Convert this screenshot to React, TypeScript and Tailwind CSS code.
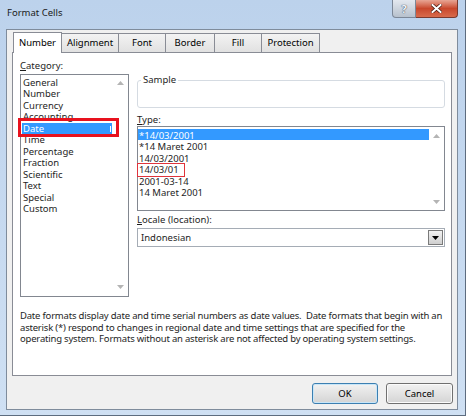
import React from 'react'

const categories = [
  'General',
  'Number',
  'Currency',
  'Accounting',
  'Date',
  'Time',
  'Percentage',
  'Fraction',
  'Scientific',
  'Text',
  'Special',
  'Custom',
]

const types = ['*14/03/2001', '*14 Maret 2001', '14/03/2001', '14/03/01', '2001-03-14', '14 Maret 2001']

const tabs = [
  { label: 'Number', w: 'w-[49px]' },
  { label: 'Alignment', w: 'w-[57px]' },
  { label: 'Font', w: 'w-[47px]' },
  { label: 'Border', w: 'w-[49px]' },
  { label: 'Fill', w: 'w-[47px]' },
  { label: 'Protection', w: 'w-[58px]' },
]

function Arrow({ down }: { down?: boolean }) {
  return (
    <svg width="7" height="4" viewBox="0 0 7 4">
      {down ? <path d="M0 0h7L3.5 4z" fill="#b4b4b4" /> : <path d="M0 4h7L3.5 0z" fill="#b4b4b4" />}
    </svg>
  )
}

function Scrollbar({ up, down }: { up: string; down: string }) {
  return (
    <div className="flex w-[15px] flex-col items-center justify-between">
      <div className={up}>
        <Arrow />
      </div>
      <div className={down}>
        <Arrow down />
      </div>
    </div>
  )
}

function TitleBar() {
  return (
    <div className="flex h-[29px] items-start justify-between pr-[7px]">
      <div className="pl-[7px] pt-[7px] text-[#1a1a1a]">Format Cells</div>
      <div className="flex">
        <div className="flex h-[18px] w-[24px] items-center justify-center rounded-bl-[4px] border border-t-0 border-[#7c8797] bg-linear-to-b from-[#e3e8ef] to-[#b7c1cd] text-[11px] font-bold text-[#f4f6f9] [text-shadow:0_0_1px_#3b4a5e,0_0_1px_#3b4a5e]">
          ?
        </div>
        <div className="flex h-[18px] w-[42px] items-center justify-center rounded-br-[4px] border border-t-0 border-l-0 border-[#7a3a2f] bg-linear-to-b from-[#e7a594] via-[#c8472c] to-[#d86b4c]">
          <svg width="11" height="9" viewBox="0 0 11 9">
            <path d="M1.5 1l8 7M9.5 1l-8 7" stroke="#4a1a10" strokeWidth="3.4" strokeLinecap="square" />
            <path d="M1.5 1l8 7M9.5 1l-8 7" stroke="#ffffff" strokeWidth="2" strokeLinecap="square" />
          </svg>
        </div>
      </div>
    </div>
  )
}

function Tabs() {
  return (
    <div className="relative z-10 -mb-px flex h-[21px] items-end pl-[1px]">
      {tabs.map((t, i) =>
        i === 0 ? (
          <div
            key={t.label}
            className={`${t.w} flex h-[21px] items-center justify-center border border-b-0 border-[#898c95] bg-white pb-[1px] text-black`}
          >
            {t.label}
          </div>
        ) : (
          <div
            key={t.label}
            className={`${t.w} flex h-[20px] items-center justify-center border-t border-b border-r border-[#898c95] bg-linear-to-b from-[#f3f3f3] to-[#e1e1e1] pb-[1px] text-black`}
          >
            {t.label}
          </div>
        ),
      )}
    </div>
  )
}

function CategoryList() {
  return (
    <div className="relative mt-[2px] flex h-[223px] border border-[#828790] bg-white">
      <div className="flex-1 px-[1px] pt-[1.5px]">
        {categories.map((c) =>
          c === 'Date' ? (
            <div key={c} className="relative h-[11.5px] bg-[#3399ff] pl-[1px] text-white">
              {c}
              <div className="absolute right-[1px] top-[3px] h-[6px] w-px bg-white" />
            </div>
          ) : (
            <div key={c} className="h-[11.5px] pl-[1px]">
              {c}
            </div>
          ),
        )}
      </div>
      <Scrollbar up="pt-[6px]" down="pb-[7px]" />
      <div className="absolute left-[-3px] top-[43px] h-[19px] w-[101px] border-[3px] border-[#e8121e]" />
    </div>
  )
}

function TypeList() {
  return (
    <div className="relative flex h-[85px] border border-[#828790] bg-white">
      <div className="flex-1 pt-[1.5px]">
        {types.map((t, i) =>
          i === 0 ? (
            <div key={t} className="flex h-[11.6px] items-end bg-[#3399ff] pl-[1px] text-white">
              <span className="translate-y-[1px]">{t}</span>
            </div>
          ) : (
            <div key={t} className="h-[11.6px] pl-[1px]">
              <span className="inline-block translate-y-[1px]">{t}</span>
            </div>
          ),
        )}
      </div>
      <Scrollbar up="pt-[7px]" down="pb-[6px]" />
      <div className="absolute left-[-1px] top-[36px] h-[14px] w-[48px] border border-[#e0343c]" />
    </div>
  )
}

function Dropdown() {
  return (
    <div className="flex h-[19px] items-center justify-between border border-[#a5acb5] bg-white pl-[3px] pr-[1px]">
      <span>Indonesian</span>
      <div className="flex h-[15px] w-[15px] items-center justify-center border border-[#7a7a7a] bg-linear-to-b from-[#f2f2f2] to-[#cfcfcf]">
        <svg width="7" height="4" viewBox="0 0 7 4">
          <path d="M0 0h7L3.5 4z" fill="#000" />
        </svg>
      </div>
    </div>
  )
}

export default function App() {
  return (
    <div className="h-[417px] w-[474px] overflow-hidden bg-white font-['Noto_Sans',sans-serif] text-[9.5px] leading-[11.5px] text-[#1e1e1e]">
      <div className="flex h-[416px] w-[466px] flex-col border-r border-b border-[#5d6c7f] bg-linear-to-b from-[#bcd2ec] to-[#cfe0f3]">
        <TitleBar />
        <div className="ml-[6px] mr-[7px] flex h-[381px] flex-col border border-[#7f8c9c] bg-[#f0f0f0]">
          <div className="ml-[5px] pt-[2px]">
            <Tabs />
            <div className="flex h-[324px] w-[440px] flex-col border border-[#898c95] bg-white">
              <div className="flex gap-[8px] pl-[7px]">
                <div className="w-[109px] pt-[7px]">
                  <div className="h-[12px]">
                    <span className="underline">C</span>ategory:
                  </div>
                  <CategoryList />
                </div>
                <div className="w-[308px] pt-[21px]">
                  <fieldset className="h-[34px] rounded-[3px] border border-[#d5dbe2] px-[3px]">
                    <legend className="px-[2px] leading-[12px]">Sample</legend>
                  </fieldset>
                  <div className="mt-[6px] h-[12px]">
                    <span className="underline">T</span>ype:
                  </div>
                  <TypeList />
                  <div className="mt-[3px] h-[12px]">
                    <span className="underline">L</span>ocale (location):
                  </div>
                  <div className="mt-[2px]">
                    <Dropdown />
                  </div>
                </div>
              </div>
              <div className="mt-[13px] whitespace-pre pl-[7px] tracking-[-0.2px]">
                {'Date formats display date and time serial numbers as date values.  Date formats that begin with an'}
                <br />
                {'asterisk (*) respond to changes in regional date and time settings that are specified for the'}
                <br />
                {'operating system. Formats without an asterisk are not affected by operating system settings.'}
              </div>
            </div>
          </div>
          <div className="mt-[7px] flex justify-end gap-[8px] pr-[4px]">
            <button className="h-[21px] w-[66px] rounded-[3px] border border-[#3c7fb1] bg-linear-to-b from-[#f2f2f2] to-[#d4d4d4] text-black shadow-[inset_0_0_0_1px_#c8e6f8]">
              OK
            </button>
            <button className="h-[21px] w-[67px] rounded-[3px] border border-[#707070] bg-linear-to-b from-[#f2f2f2] to-[#d4d4d4] text-black shadow-[inset_0_0_0_1px_#fbfbfb]">
              Cancel
            </button>
          </div>
        </div>
      </div>
    </div>
  )
}
